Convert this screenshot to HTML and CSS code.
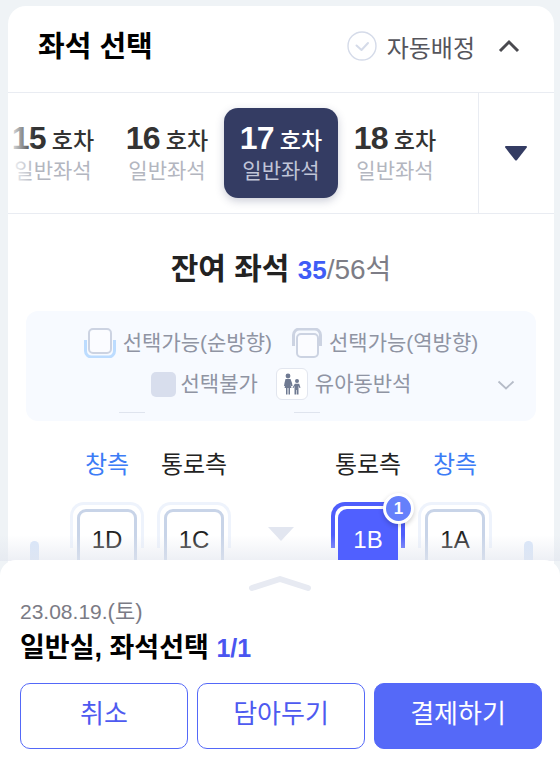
FILE: index.html
```html
<!DOCTYPE html>
<html lang="ko">
<head>
    <meta charset="UTF-8">
    <meta name="viewport" content="width=device-width, initial-scale=1.0">
    <title>좌석 선택</title>
    <link rel="stylesheet" href="styles.css">
</head>
<body>
    <div class="card">
        <div class="header">
            <h1 class="title">좌석 선택</h1>
            <div class="auto">
                <svg class="check" width="30" height="30" viewBox="0 0 30 30">
                    <circle cx="15" cy="15" r="14" fill="#fff" stroke="#d5dbe9" stroke-width="1.4"/>
                    <path d="M9.5 14.5l5 4.5 6.5-7" fill="none" stroke="#d5dbe9" stroke-width="2" stroke-linecap="round" stroke-linejoin="round"/>
                </svg>
                <span>자동배정</span>
                <svg class="fold" width="22" height="14" viewBox="0 0 22 14">
                    <path d="M2 12l9-9 9 9" fill="none" stroke="#4a4a4f" stroke-width="3"/>
                </svg>
            </div>
        </div>

        <div class="cars">
            <div class="car-list">
                <div class="car"><div class="car-no"><b>15</b> 호차</div><div class="car-type">일반좌석</div></div>
                <div class="car"><div class="car-no"><b>16</b> 호차</div><div class="car-type">일반좌석</div></div>
                <div class="car active"><div class="car-no"><b>17</b> 호차</div><div class="car-type">일반좌석</div></div>
                <div class="car"><div class="car-no"><b>18</b> 호차</div><div class="car-type">일반좌석</div></div>
                <div class="car-fade"></div>
            </div>
            <div class="car-more">
                <svg width="24" height="16" viewBox="0 0 24 16"><path d="M2 1h20a1 1 0 0 1 .8 1.6L13 15a1.3 1.3 0 0 1-2 0L1.200 2.600A1 1 0 0 1 2 1z" fill="#343c63"/></svg>
            </div>
        </div>

        <div class="remain">잔여 좌석 <span class="remain-now">35</span><span class="remain-all">/56<span class="remain-unit">석</span></span></div>

        <div class="legend">
            <div class="legend-row">
                <span class="legend-item">
                    <svg width="32" height="30" viewBox="0 0 32 30">
                        <path d="M1.500 12v11a6 6 0 0 0 6 6h17a6 6 0 0 0 6-6V12" fill="none" stroke="#bcdcff" stroke-width="3"/>
                        <rect x="5" y="1" width="22" height="24" rx="4" fill="#fbfcff" stroke="#ccd3e2" stroke-width="2"/>
                    </svg>
                    선택가능(순방향)
                </span>
                <span class="legend-item">
                    <svg width="30" height="30" viewBox="0 0 30 30">
                        <path d="M1.500 18V7a6 6 0 0 1 6-6h15a6 6 0 0 1 6 6v11" fill="none" stroke="#ccd3e2" stroke-width="3"/>
                        <rect x="5" y="6" width="21" height="23" rx="4" fill="#fbfcff" stroke="#ccd3e2" stroke-width="2"/>
                    </svg>
                    선택가능(역방향)
                </span>
            </div>
            <div class="legend-row second">
                <span class="legend-item tight">
                    <span class="swatch"></span>
                    선택불가
                </span>
                <span class="legend-item">
                    <span class="kids">
                        <svg width="20" height="22" viewBox="0 0 20 22" fill="#6f7a92">
                            <circle cx="6" cy="3" r="2.400"/>
                            <path d="M3.500 6h5l1.500 4 .6 3-1.400.3L8 10.500 9.500 15H8v6.500H6.500V15h-1v6.500H4V15H2.500L4 10.500l-.7 2.800-1.300-.3L2.500 10z"/>
                            <circle cx="15" cy="8" r="2"/>
                            <path d="M12.800 10.800h4.400l1.300 4-1.100.3-.9-2.300v8.700h-1.700v-4.500h-.6v4.500h-1.700v-8.700l-.9 2.300-1.100-.3z"/>
                        </svg>
                    </span>
                    유아동반석
                </span>
                <svg class="legend-open" width="18" height="10" viewBox="0 0 18 10">
                    <path d="M1.500 1.500L9 8.500l7.500-7" fill="none" stroke="#b6bcc8" stroke-width="1.800"/>
                </svg>
            </div>
            <div class="legend-peek">
                <span></span>
                <span></span>
            </div>
        </div>

        <div class="seat-labels">
            <span class="seat-label window">창측</span>
            <span class="seat-label">통로측</span>
            <span class="aisle"></span>
            <span class="seat-label">통로측</span>
            <span class="seat-label window">창측</span>
        </div>

        <div class="seat-row">
            <span class="side-bar"></span>
            <div class="seat"><div class="seat-box">1D</div></div>
            <div class="seat"><div class="seat-box">1C</div></div>
            <div class="aisle"><span class="aisle-mark"></span></div>
            <div class="seat picked"><div class="seat-box">1B</div><span class="seat-badge">1</span></div>
            <div class="seat"><div class="seat-box">1A</div></div>
            <span class="side-bar"></span>
        </div>
    </div>

    <div class="sheet-fade"></div>

    <div class="sheet">
        <svg class="handle" width="70" height="20" viewBox="0 0 70 20">
            <path d="M6 15L34 6l28 9" fill="none" stroke="#e7eaf2" stroke-width="6" stroke-linecap="round" stroke-linejoin="round"/>
        </svg>
        <div class="sheet-date">23.08.19.<span class="sheet-day">(토)</span></div>
        <div class="sheet-info">일반실, 좌석선택 <span class="sheet-count">1/1</span></div>
        <div class="sheet-buttons">
            <div class="btn">취소</div>
            <div class="btn">담아두기</div>
            <div class="btn primary">결제하기</div>
        </div>
    </div>
</body>
</html>
```

FILE: styles.css
```css
* {
    box-sizing: border-box;
}

html, body {
    height: 100%;
}

body {
    position: relative;
    margin: 0;
    overflow: hidden;
    padding: 6px 6px 0 8px;
    font-family: "Liberation Sans", "Noto Sans CJK KR", sans-serif;
    background-color: #eff3f6;
    color: #222;
}

.card {
    height: 740px;
    overflow: hidden;
    border-radius: 18px 18px 0 0;
    background-color: #fff;
}

.header {
    display: flex;
    justify-content: space-between;
    align-items: center;
    height: 87px;
    padding: 0 34px 6px 30px;
    border-bottom: 1px solid #e9ecf2;
}

.title {
    margin: 0 0 4px;
    font-size: 29px;
    font-weight: 700;
    color: #000;
}

.auto {
    display: flex;
    align-items: center;
    font-size: 24px;
    color: #55555c;
}

.check {
    margin-right: 10px;
}

.fold {
    margin-left: 23px;
}

.cars {
    display: flex;
    height: 121px;
    border-bottom: 1px solid #e9ecf2;
}

.car-list {
    position: relative;
    flex: 1;
    display: flex;
    align-items: center;
    overflow: hidden;
}

.car {
    flex: 0 0 114px;
    height: 90px;
    padding-top: 14px;
    border-radius: 14px;
    text-align: center;
}

.car:first-child {
    margin-left: -12px;
}

.car-no {
    font-size: 23px;
    font-weight: 500;
    line-height: 32px;
    white-space: nowrap;
    color: #333;
}

.car-no b {
    font-size: 32px;
    letter-spacing: -1px;
}

.car-type {
    font-size: 21px;
    line-height: 28px;
    white-space: nowrap;
    color: #b3b6bf;
}

.car.active {
    background-color: #343c63;
    box-shadow: 0 3px 8px rgba(52, 60, 99, 0.25);
}

.car.active .car-no {
    color: #fff;
}

.car.active .car-type {
    color: #c0c5d8;
}

.car-fade {
    position: absolute;
    left: 0;
    top: 0;
    bottom: 0;
    width: 26px;
    background: linear-gradient(to right, #fff, rgba(255, 255, 255, 0));
}

.car-more {
    flex: 0 0 76px;
    display: flex;
    justify-content: center;
    align-items: center;
    padding-right: 2px;
    border-left: 1px solid #e9ecf2;
}

.remain {
    padding-top: 36px;
    font-size: 30px;
    font-weight: 700;
    line-height: 38px;
    text-align: center;
    color: #222;
}

.remain-now {
    color: #3f5cf6;
    font-size: 26px;
}

.remain-all {
    color: #7d7d86;
    font-size: 28px;
    font-weight: 400;
}

.remain-unit {
    font-size: 28px;
}

.legend {
    height: 110px;
    margin: 22px 18px 0;
    padding-top: 16px;
    border-radius: 12px;
    background-color: #f7faff;
    font-size: 21px;
    color: #8f94a3;
}

.legend-row {
    display: flex;
    justify-content: center;
    gap: 20px;
    height: 32px;
}

.legend-row.second {
    position: relative;
    gap: 18px;
    margin-top: 9px;
}

.legend-item {
    display: flex;
    align-items: center;
    gap: 7px;
    padding-bottom: 5px;
    white-space: nowrap;
}

.legend-item > svg,
.legend-item > .swatch,
.legend-item > .kids {
    flex-shrink: 0;
    margin-top: 5px;
    margin-bottom: 0;
}

.legend-item.tight {
    gap: 5px;
}

.swatch {
    width: 25px;
    height: 25px;
    border-radius: 5px;
    background-color: #d8deed;
}

.kids {
    display: flex;
    justify-content: center;
    align-items: center;
    width: 32px;
    height: 32px;
    border: 1px solid #e2e6ef;
    border-radius: 6px;
    background-color: #fff;
}

.legend-open {
    position: absolute;
    right: 21px;
    top: 12px;
}

.legend-peek {
    display: flex;
    gap: 149px;
    margin: 12px 0 0 93px;
}

.legend-peek span {
    width: 26px;
    height: 1px;
    background-color: #dfe4ee;
}

.seat-labels {
    display: flex;
    gap: 13px;
    margin-top: 27px;
    padding-left: 62px;
    font-size: 24px;
    line-height: 34px;
}

.seat-label {
    width: 74px;
    text-align: center;
    white-space: nowrap;
}

.seat-label.window {
    color: #3c7cf6;
}

.aisle {
    display: flex;
    justify-content: center;
    width: 74px;
}

.seat-row {
    display: flex;
    gap: 13px;
    margin-top: 20px;
    padding-left: 22px;
}

.side-bar {
    width: 9px;
    height: 60px;
    margin: 39px 0 0 19px;
    border-radius: 5px;
    background-color: #d9e6f9;
}

.side-bar:first-child {
    margin: 39px 18px 0 0;
}

.seat {
    position: relative;
    width: 74px;
    height: 46px;
    padding: 4px 4px 0;
    border: 3px solid #eef3fc;
    border-bottom: 0;
    border-radius: 14px 14px 0 0;
}

.seat-box {
    height: 90px;
    padding-top: 15px;
    border: 3px solid #c8d4e8;
    border-radius: 9px;
    background-color: #fff;
    font-size: 24px;
    line-height: 26px;
    text-align: center;
    color: #222;
}

.seat.picked {
    padding: 3px 3px 0;
    border-width: 4px;
    border-color: #4f5efc;
}

.seat.picked .seat-box {
    position: relative;
    z-index: 1;
    border-color: #5060ff;
    background-color: #5060ff;
    color: #fff;
}

.seat-badge {
    position: absolute;
    z-index: 1;
    top: -13px;
    right: -13px;
    width: 31px;
    height: 31px;
    border: 3px solid #fff;
    border-radius: 50%;
    background-color: #6580fb;
    box-shadow: 0 2px 5px rgba(0, 0, 0, 0.2);
    font-size: 17px;
    font-weight: 700;
    line-height: 25px;
    text-align: center;
    color: #fff;
}

.aisle-mark {
    width: 0;
    height: 0;
    margin-top: 25px;
    border-left: 13px solid transparent;
    border-right: 13px solid transparent;
    border-top: 14px solid #e2e6f0;
}

.sheet-fade {
    position: absolute;
    left: 0;
    right: 0;
    top: 535px;
    height: 26px;
    background: linear-gradient(to bottom, rgba(225, 229, 238, 0), rgba(225, 229, 238, 0.6));
}

.sheet {
    position: absolute;
    z-index: 2;
    left: 0;
    right: 0;
    bottom: 0;
    height: 197px;
    padding: 0 18px 0 20px;
    border-radius: 16px 16px 0 0;
    background-color: #fff;
}

.handle {
    display: block;
    margin: 13px auto 0;
}

.sheet-date {
    margin-top: 5px;
    font-size: 21px;
    line-height: 28px;
    color: #7b7b85;
}

.sheet-day {
    font-size: 22px;
}

.sheet-info {
    margin-top: 4px;
    font-size: 27px;
    font-weight: 700;
    line-height: 36px;
    color: #000;
}

.sheet-count {
    color: #4a55f0;
    font-size: 25px;
}

.sheet-buttons {
    display: flex;
    gap: 9px;
    margin-top: 17px;
}

.btn {
    flex: 1;
    height: 66px;
    border: 1px solid #5468f8;
    border-radius: 10px;
    font-size: 26px;
    line-height: 60px;
    text-align: center;
    color: #4e5af0;
}

.btn.primary {
    background-color: #5569f8;
    color: #fff;
}
```
